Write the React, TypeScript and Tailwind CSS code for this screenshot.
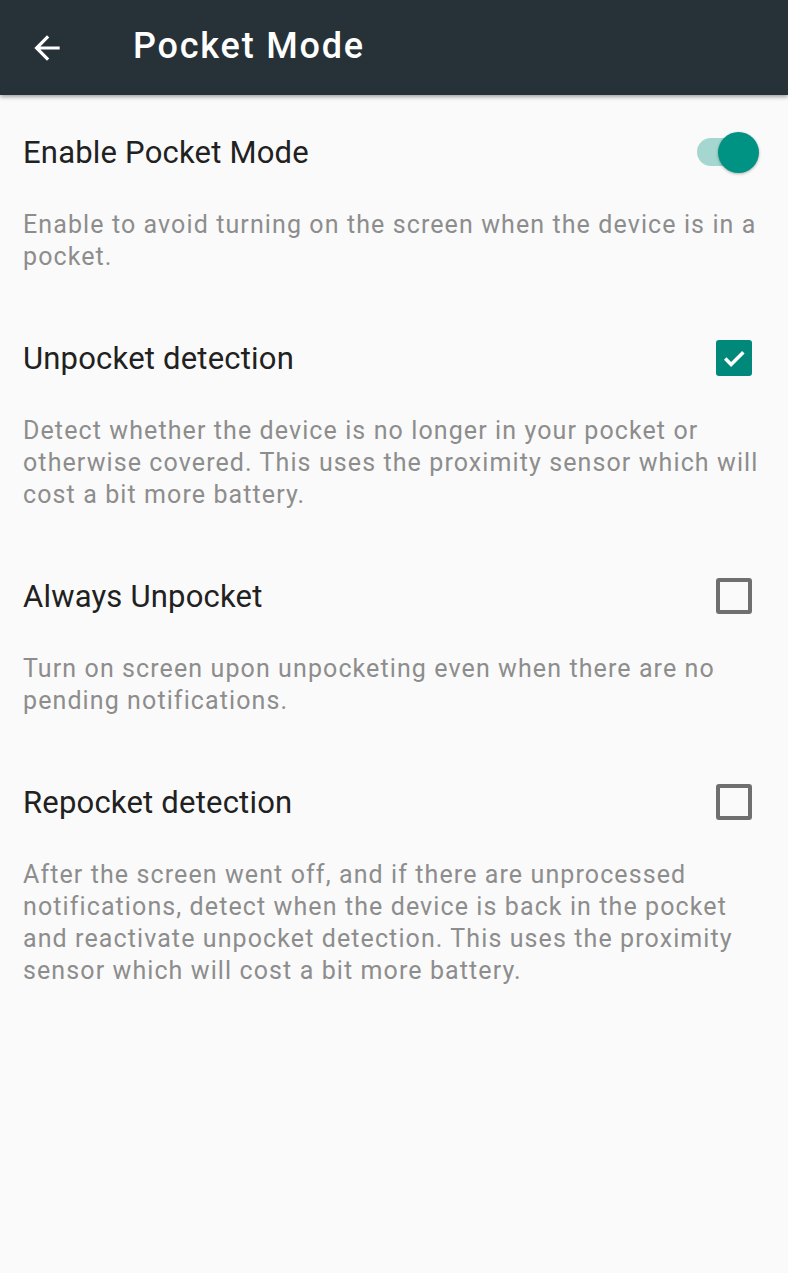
import React from "react";

function Switch() {
  return (
    <div className="relative w-[62px] h-[42px] flex items-center mr-[-7px]">
      <div className="absolute left-[0px] right-[8px] h-[28px] rounded-full bg-[#a5d6cf]" />
      <div className="absolute right-0 w-[41px] h-[41px] rounded-full bg-[#009282] shadow-[0_1px_3px_rgba(0,0,0,0.3)]" />
    </div>
  );
}

function Checkbox({ checked }: { checked: boolean }) {
  if (checked) {
    return (
      <div className="w-[36px] h-[36px] rounded-[3px] bg-[#00897b] flex items-center justify-center">
        <svg width="28" height="28" viewBox="0 0 24 24">
          <path d="M4.5 12.5l5 5L20 7" fill="none" stroke="#fff" strokeWidth="3" />
        </svg>
      </div>
    );
  }
  return <div className="w-[36px] h-[36px] rounded-[3px] border-[4px] border-[#6f6f6f]" />;
}

function Row({
  title,
  desc,
  control,
}: {
  title: string;
  desc: string;
  control: React.ReactNode;
}) {
  return (
    <div className="pl-[23px]">
      <div className="flex items-center justify-between h-[60px] pr-[36px]">
        <div className="text-[31px] text-[#212121] leading-none tracking-[0.2px]">{title}</div>
        <div className="flex items-center justify-center">{control}</div>
      </div>
      <div className="mt-[27px] text-[25px] leading-[32px] text-[#8d8d8d] tracking-[1.1px] pr-[16px]">{desc}</div>
    </div>
  );
}

export default function App() {
  return (
    <div
      className="w-[788px] h-[1273px] bg-[#fafafa] overflow-hidden"
      style={{ fontFamily: "Roboto, 'Noto Sans', sans-serif" }}
    >
      <div className="h-[95px] bg-[#263238] flex items-center shadow-[0_2px_4px_rgba(0,0,0,0.35)]">
        <div className="w-[133px] flex items-center pl-[28px]">
          <svg width="38" height="38" viewBox="0 0 24 24">
            <path d="M20 11H7.83l5.59-5.59L12 4l-8 8 8 8 1.41-1.41L7.83 13H20v-2z" fill="#fff" />
          </svg>
        </div>
        <div className="text-[36px] font-medium text-white leading-none pb-[4px] tracking-[1.8px]">Pocket Mode</div>
      </div>
      <div className="pt-[27px] flex flex-col gap-[55px]">
        <Row
          title="Enable Pocket Mode"
          desc="Enable to avoid turning on the screen when the device is in a pocket."
          control={<Switch />}
        />
        <Row
          title="Unpocket detection"
          desc="Detect whether the device is no longer in your pocket or otherwise covered. This uses the proximity sensor which will cost a bit more battery."
          control={<Checkbox checked />}
        />
        <Row
          title="Always Unpocket"
          desc="Turn on screen upon unpocketing even when there are no pending notifications."
          control={<Checkbox checked={false} />}
        />
        <Row
          title="Repocket detection"
          desc="After the screen went off, and if there are unprocessed notifications, detect when the device is back in the pocket and reactivate unpocket detection. This uses the proximity sensor which will cost a bit more battery."
          control={<Checkbox checked={false} />}
        />
      </div>
    </div>
  );
}
